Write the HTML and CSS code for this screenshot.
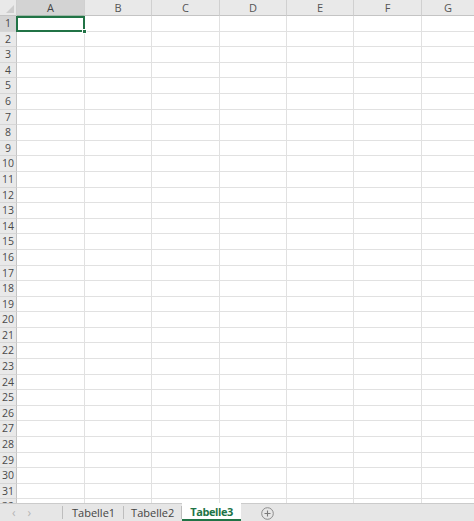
FILE: index.html
```html
<!DOCTYPE html>
<html>
<head>
<meta charset="utf-8">
<link rel="stylesheet" href="styles.css">
</head>
<body>
<div class="app">
  <div class="sheet">
    <div class="row head">
      <div class="corner"><span class="tri"></span></div>
      <div class="ch active">A</div><div class="ch">B</div><div class="ch">C</div><div class="ch">D</div><div class="ch">E</div><div class="ch">F</div><div class="ch last">G</div>
    </div>
    <div class="row"><div class="rh active">1</div><div class="c sel"><span class="handle"></span></div><div class="c"></div><div class="c"></div><div class="c"></div><div class="c"></div><div class="c"></div><div class="c last"></div></div>
    <div class="row"><div class="rh">2</div><div class="c"></div><div class="c"></div><div class="c"></div><div class="c"></div><div class="c"></div><div class="c"></div><div class="c last"></div></div>
    <div class="row"><div class="rh">3</div><div class="c"></div><div class="c"></div><div class="c"></div><div class="c"></div><div class="c"></div><div class="c"></div><div class="c last"></div></div>
    <div class="row"><div class="rh">4</div><div class="c"></div><div class="c"></div><div class="c"></div><div class="c"></div><div class="c"></div><div class="c"></div><div class="c last"></div></div>
    <div class="row"><div class="rh">5</div><div class="c"></div><div class="c"></div><div class="c"></div><div class="c"></div><div class="c"></div><div class="c"></div><div class="c last"></div></div>
    <div class="row"><div class="rh">6</div><div class="c"></div><div class="c"></div><div class="c"></div><div class="c"></div><div class="c"></div><div class="c"></div><div class="c last"></div></div>
    <div class="row"><div class="rh">7</div><div class="c"></div><div class="c"></div><div class="c"></div><div class="c"></div><div class="c"></div><div class="c"></div><div class="c last"></div></div>
    <div class="row"><div class="rh">8</div><div class="c"></div><div class="c"></div><div class="c"></div><div class="c"></div><div class="c"></div><div class="c"></div><div class="c last"></div></div>
    <div class="row"><div class="rh">9</div><div class="c"></div><div class="c"></div><div class="c"></div><div class="c"></div><div class="c"></div><div class="c"></div><div class="c last"></div></div>
    <div class="row"><div class="rh">10</div><div class="c"></div><div class="c"></div><div class="c"></div><div class="c"></div><div class="c"></div><div class="c"></div><div class="c last"></div></div>
    <div class="row"><div class="rh">11</div><div class="c"></div><div class="c"></div><div class="c"></div><div class="c"></div><div class="c"></div><div class="c"></div><div class="c last"></div></div>
    <div class="row"><div class="rh">12</div><div class="c"></div><div class="c"></div><div class="c"></div><div class="c"></div><div class="c"></div><div class="c"></div><div class="c last"></div></div>
    <div class="row"><div class="rh">13</div><div class="c"></div><div class="c"></div><div class="c"></div><div class="c"></div><div class="c"></div><div class="c"></div><div class="c last"></div></div>
    <div class="row"><div class="rh">14</div><div class="c"></div><div class="c"></div><div class="c"></div><div class="c"></div><div class="c"></div><div class="c"></div><div class="c last"></div></div>
    <div class="row"><div class="rh">15</div><div class="c"></div><div class="c"></div><div class="c"></div><div class="c"></div><div class="c"></div><div class="c"></div><div class="c last"></div></div>
    <div class="row"><div class="rh">16</div><div class="c"></div><div class="c"></div><div class="c"></div><div class="c"></div><div class="c"></div><div class="c"></div><div class="c last"></div></div>
    <div class="row"><div class="rh">17</div><div class="c"></div><div class="c"></div><div class="c"></div><div class="c"></div><div class="c"></div><div class="c"></div><div class="c last"></div></div>
    <div class="row"><div class="rh">18</div><div class="c"></div><div class="c"></div><div class="c"></div><div class="c"></div><div class="c"></div><div class="c"></div><div class="c last"></div></div>
    <div class="row"><div class="rh">19</div><div class="c"></div><div class="c"></div><div class="c"></div><div class="c"></div><div class="c"></div><div class="c"></div><div class="c last"></div></div>
    <div class="row"><div class="rh">20</div><div class="c"></div><div class="c"></div><div class="c"></div><div class="c"></div><div class="c"></div><div class="c"></div><div class="c last"></div></div>
    <div class="row"><div class="rh">21</div><div class="c"></div><div class="c"></div><div class="c"></div><div class="c"></div><div class="c"></div><div class="c"></div><div class="c last"></div></div>
    <div class="row"><div class="rh">22</div><div class="c"></div><div class="c"></div><div class="c"></div><div class="c"></div><div class="c"></div><div class="c"></div><div class="c last"></div></div>
    <div class="row"><div class="rh">23</div><div class="c"></div><div class="c"></div><div class="c"></div><div class="c"></div><div class="c"></div><div class="c"></div><div class="c last"></div></div>
    <div class="row"><div class="rh">24</div><div class="c"></div><div class="c"></div><div class="c"></div><div class="c"></div><div class="c"></div><div class="c"></div><div class="c last"></div></div>
    <div class="row"><div class="rh">25</div><div class="c"></div><div class="c"></div><div class="c"></div><div class="c"></div><div class="c"></div><div class="c"></div><div class="c last"></div></div>
    <div class="row"><div class="rh">26</div><div class="c"></div><div class="c"></div><div class="c"></div><div class="c"></div><div class="c"></div><div class="c"></div><div class="c last"></div></div>
    <div class="row"><div class="rh">27</div><div class="c"></div><div class="c"></div><div class="c"></div><div class="c"></div><div class="c"></div><div class="c"></div><div class="c last"></div></div>
    <div class="row"><div class="rh">28</div><div class="c"></div><div class="c"></div><div class="c"></div><div class="c"></div><div class="c"></div><div class="c"></div><div class="c last"></div></div>
    <div class="row"><div class="rh">29</div><div class="c"></div><div class="c"></div><div class="c"></div><div class="c"></div><div class="c"></div><div class="c"></div><div class="c last"></div></div>
    <div class="row"><div class="rh">30</div><div class="c"></div><div class="c"></div><div class="c"></div><div class="c"></div><div class="c"></div><div class="c"></div><div class="c last"></div></div>
    <div class="row"><div class="rh">31</div><div class="c"></div><div class="c"></div><div class="c"></div><div class="c"></div><div class="c"></div><div class="c"></div><div class="c last"></div></div>
    <div class="row"><div class="rh">32</div><div class="c"></div><div class="c"></div><div class="c"></div><div class="c"></div><div class="c"></div><div class="c"></div><div class="c last"></div></div>
  </div>
  <div class="tabbar">
    <div class="nav"><span class="arrow">&#8249;</span><span class="arrow">&#8250;</span></div>
    <div class="tab">Tabelle1</div>
    <div class="tab second">Tabelle2</div>
    <div class="tab current">Tabelle3</div>
    <div class="add">
      <svg width="13" height="13" viewBox="0 0 13 13"><circle cx="6.5" cy="6.5" r="5.8" fill="none" stroke="#8a8a8a" stroke-width="1"/><path d="M6.5 3.5v6M3.5 6.5h6" stroke="#7a7a7a" stroke-width="1.1"/></svg>
    </div>
  </div>
</div>
</body>
</html>
```
FILE: styles.css
```css
* { box-sizing: border-box; }
html, body { margin: 0; padding: 0; background: #fff; }
body { font-family: "Open Sans", "Liberation Sans", sans-serif; }
.app { width: 474px; height: 521px; display: flex; flex-direction: column; overflow: hidden; }
.sheet { height: 503px; overflow: hidden; display: flex; flex-direction: column; }
.row { display: flex; height: 15.6px; flex: none; }
.row.head { height: 16px; }
.corner { width: 17px; flex: none; background: #e9e9e9; border-right: 1px solid #cfcfcf; border-bottom: 1px solid #c4c4c4; position: relative; }
.tri { position: absolute; right: 2px; bottom: 2px; width: 0; height: 0; border-left: 8px solid transparent; border-bottom: 8px solid #cdcdcd; }
.ch { flex: none; height: 16px; background: #e9e9e9; border-right: 1px solid #d0d0d0; border-bottom: 1px solid #c4c4c4; font-size: 11px; color: #555; text-align: center; line-height: 15px; }
.ch:nth-child(2) { width: 68px; }
.ch:nth-child(3) { width: 67px; }
.ch:nth-child(4) { width: 68px; }
.ch:nth-child(5) { width: 67px; }
.ch:nth-child(6) { width: 67px; }
.ch:nth-child(7) { width: 68px; }
.ch.last { flex: 1; border-right: none; }
.ch.active { background: #d3d3d3; border-bottom: 1px solid #9fb8a7; color: #444; }
.rh { width: 17px; flex: none; background: #e9e9e9; border-right: 1px solid #c4c4c4; border-bottom: 1px solid #d6d6d6; font-size: 10.5px; color: #4a4a4a; text-align: center; line-height: 15px; overflow: hidden; }
.rh.active { background: #d3d3d3; border-right: 1px solid #9fb8a7; color: #444; }
.c { flex: none; border-right: 1px solid #e1e1e1; border-bottom: 1px solid #e1e1e1; }
.c:nth-child(2) { width: 68px; }
.c:nth-child(3) { width: 67px; }
.c:nth-child(4) { width: 68px; }
.c:nth-child(5) { width: 67px; }
.c:nth-child(6) { width: 67px; }
.c:nth-child(7) { width: 68px; }
.c.last { flex: 1; border-right: none; }
.c.sel { border: 2px solid #217346; position: relative; margin-left: -1px; width: 69px; }
.handle { position: absolute; right: -4px; bottom: -4px; width: 5px; height: 5px; background: #217346; border: 1px solid #fff; }
.tabbar { height: 18px; flex: none; display: flex; align-items: stretch; background: #e6e6e6; border-top: 1px solid #cbcbcb; font-size: 11px; color: #444; }
.nav { width: 63px; display: flex; align-items: center; gap: 12px; padding-left: 12px; border-right: 1px solid #bdbdbd; margin: 2px 0; }
.arrow { color: #b5b5b5; font-size: 12px; line-height: 12px; }
.tab { padding: 0 8px 0 9px; display: flex; align-items: center; border-right: 1px solid #bdbdbd; margin: 2px 0; }
.tab.second { padding: 0 7px 0 7px; }
.tab.current { margin: -1px 0 0 0; background: #fff; color: #217346; font-weight: bold; letter-spacing: -0.4px; border-right: none; border-bottom: 2px solid #217346; padding: 0 8px 0 8px; }
.add { display: flex; align-items: center; padding-left: 20px; padding-top: 1px; }
```
